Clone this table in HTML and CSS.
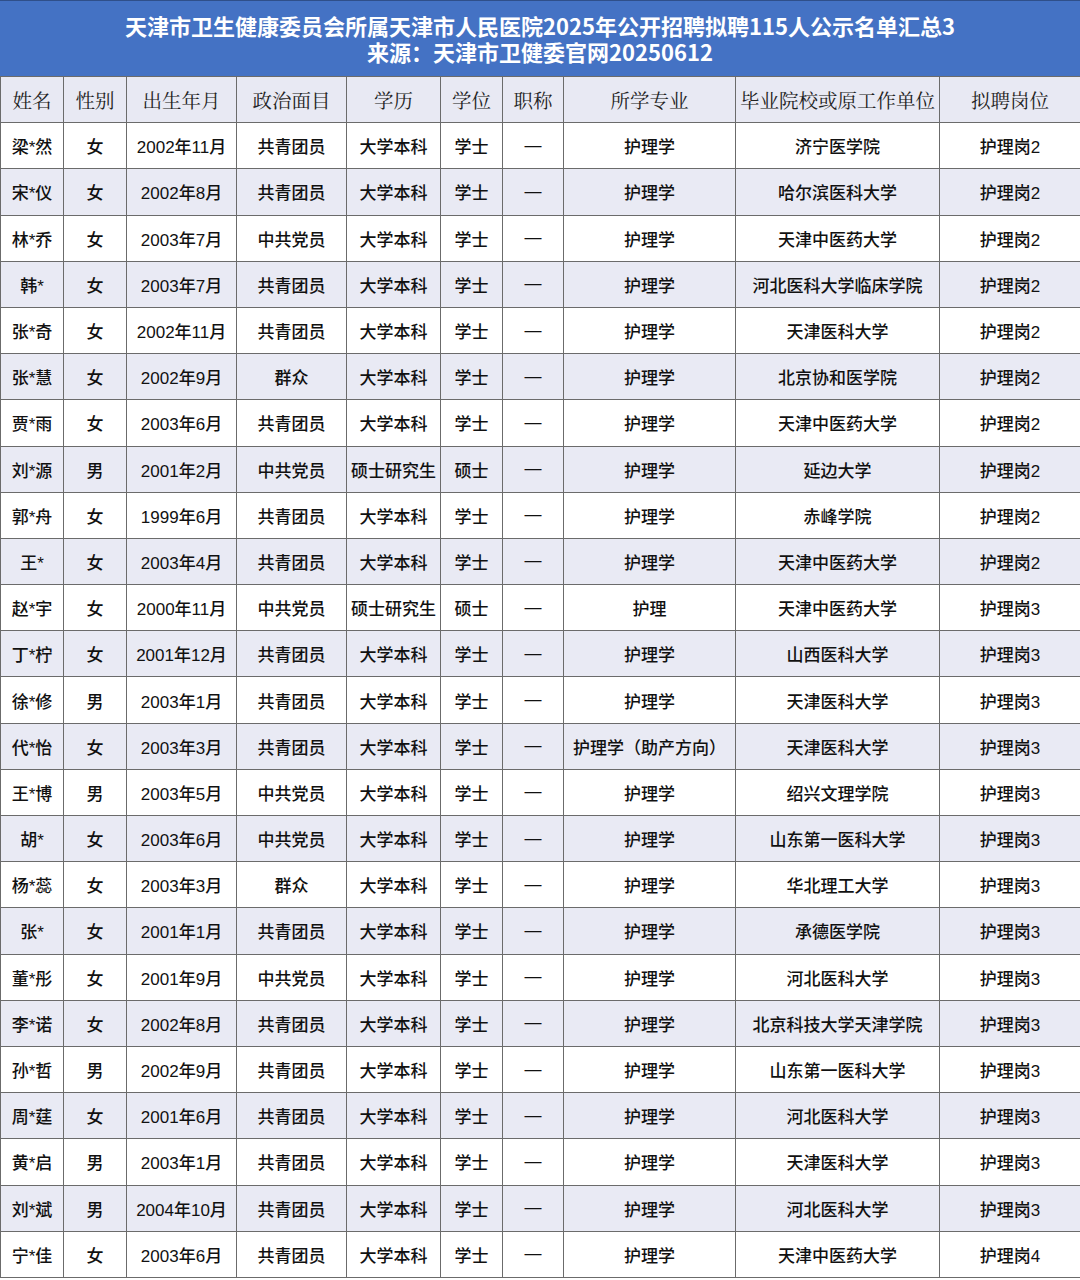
FILE: index.html
```html
<!DOCTYPE html>
<html lang="zh-CN">
<head>
<meta charset="utf-8">
<link rel="stylesheet" href="styles.css">
</head>
<body>
<div class="title">
  <div class="title-line">天津市卫生健康委员会所属天津市人民医院2025年公开招聘拟聘115人公示名单汇总3</div>
  <div class="title-line">来源：天津市卫健委官网20250612</div>
</div>
<table class="list">
  <colgroup>
    <col class="c1"><col class="c2"><col class="c3"><col class="c4"><col class="c5">
    <col class="c6"><col class="c7"><col class="c8"><col class="c9"><col class="c10">
  </colgroup>
  <thead>
    <tr><th>姓名</th><th>性别</th><th>出生年月</th><th>政治面目</th><th>学历</th><th>学位</th><th>职称</th><th>所学专业</th><th>毕业院校或原工作单位</th><th>拟聘岗位</th></tr>
  </thead>
  <tbody>
    <tr><td>梁*然</td><td>女</td><td>2002年11月</td><td>共青团员</td><td>大学本科</td><td>学士</td><td>—</td><td>护理学</td><td>济宁医学院</td><td>护理岗2</td></tr>
    <tr><td>宋*仪</td><td>女</td><td>2002年8月</td><td>共青团员</td><td>大学本科</td><td>学士</td><td>—</td><td>护理学</td><td>哈尔滨医科大学</td><td>护理岗2</td></tr>
    <tr><td>林*乔</td><td>女</td><td>2003年7月</td><td>中共党员</td><td>大学本科</td><td>学士</td><td>—</td><td>护理学</td><td>天津中医药大学</td><td>护理岗2</td></tr>
    <tr><td>韩*</td><td>女</td><td>2003年7月</td><td>共青团员</td><td>大学本科</td><td>学士</td><td>—</td><td>护理学</td><td>河北医科大学临床学院</td><td>护理岗2</td></tr>
    <tr><td>张*奇</td><td>女</td><td>2002年11月</td><td>共青团员</td><td>大学本科</td><td>学士</td><td>—</td><td>护理学</td><td>天津医科大学</td><td>护理岗2</td></tr>
    <tr><td>张*慧</td><td>女</td><td>2002年9月</td><td>群众</td><td>大学本科</td><td>学士</td><td>—</td><td>护理学</td><td>北京协和医学院</td><td>护理岗2</td></tr>
    <tr><td>贾*雨</td><td>女</td><td>2003年6月</td><td>共青团员</td><td>大学本科</td><td>学士</td><td>—</td><td>护理学</td><td>天津中医药大学</td><td>护理岗2</td></tr>
    <tr><td>刘*源</td><td>男</td><td>2001年2月</td><td>中共党员</td><td>硕士研究生</td><td>硕士</td><td>—</td><td>护理学</td><td>延边大学</td><td>护理岗2</td></tr>
    <tr><td>郭*舟</td><td>女</td><td>1999年6月</td><td>共青团员</td><td>大学本科</td><td>学士</td><td>—</td><td>护理学</td><td>赤峰学院</td><td>护理岗2</td></tr>
    <tr><td>王*</td><td>女</td><td>2003年4月</td><td>共青团员</td><td>大学本科</td><td>学士</td><td>—</td><td>护理学</td><td>天津中医药大学</td><td>护理岗2</td></tr>
    <tr><td>赵*宇</td><td>女</td><td>2000年11月</td><td>中共党员</td><td>硕士研究生</td><td>硕士</td><td>—</td><td>护理</td><td>天津中医药大学</td><td>护理岗3</td></tr>
    <tr><td>丁*柠</td><td>女</td><td>2001年12月</td><td>共青团员</td><td>大学本科</td><td>学士</td><td>—</td><td>护理学</td><td>山西医科大学</td><td>护理岗3</td></tr>
    <tr><td>徐*修</td><td>男</td><td>2003年1月</td><td>共青团员</td><td>大学本科</td><td>学士</td><td>—</td><td>护理学</td><td>天津医科大学</td><td>护理岗3</td></tr>
    <tr><td>代*怡</td><td>女</td><td>2003年3月</td><td>共青团员</td><td>大学本科</td><td>学士</td><td>—</td><td>护理学（助产方向）</td><td>天津医科大学</td><td>护理岗3</td></tr>
    <tr><td>王*博</td><td>男</td><td>2003年5月</td><td>中共党员</td><td>大学本科</td><td>学士</td><td>—</td><td>护理学</td><td>绍兴文理学院</td><td>护理岗3</td></tr>
    <tr><td>胡*</td><td>女</td><td>2003年6月</td><td>中共党员</td><td>大学本科</td><td>学士</td><td>—</td><td>护理学</td><td>山东第一医科大学</td><td>护理岗3</td></tr>
    <tr><td>杨*蕊</td><td>女</td><td>2003年3月</td><td>群众</td><td>大学本科</td><td>学士</td><td>—</td><td>护理学</td><td>华北理工大学</td><td>护理岗3</td></tr>
    <tr><td>张*</td><td>女</td><td>2001年1月</td><td>共青团员</td><td>大学本科</td><td>学士</td><td>—</td><td>护理学</td><td>承德医学院</td><td>护理岗3</td></tr>
    <tr><td>董*彤</td><td>女</td><td>2001年9月</td><td>中共党员</td><td>大学本科</td><td>学士</td><td>—</td><td>护理学</td><td>河北医科大学</td><td>护理岗3</td></tr>
    <tr><td>李*诺</td><td>女</td><td>2002年8月</td><td>共青团员</td><td>大学本科</td><td>学士</td><td>—</td><td>护理学</td><td>北京科技大学天津学院</td><td>护理岗3</td></tr>
    <tr><td>孙*哲</td><td>男</td><td>2002年9月</td><td>共青团员</td><td>大学本科</td><td>学士</td><td>—</td><td>护理学</td><td>山东第一医科大学</td><td>护理岗3</td></tr>
    <tr><td>周*莛</td><td>女</td><td>2001年6月</td><td>共青团员</td><td>大学本科</td><td>学士</td><td>—</td><td>护理学</td><td>河北医科大学</td><td>护理岗3</td></tr>
    <tr><td>黄*启</td><td>男</td><td>2003年1月</td><td>共青团员</td><td>大学本科</td><td>学士</td><td>—</td><td>护理学</td><td>天津医科大学</td><td>护理岗3</td></tr>
    <tr><td>刘*斌</td><td>男</td><td>2004年10月</td><td>共青团员</td><td>大学本科</td><td>学士</td><td>—</td><td>护理学</td><td>河北医科大学</td><td>护理岗3</td></tr>
    <tr><td>宁*佳</td><td>女</td><td>2003年6月</td><td>共青团员</td><td>大学本科</td><td>学士</td><td>—</td><td>护理学</td><td>天津中医药大学</td><td>护理岗4</td></tr>
  </tbody>
</table>
</body>
</html>
```
FILE: styles.css
```css
html, body {
  margin: 0;
  padding: 0;
  background: #ffffff;
}
body {
  width: 1080px;
  font-family: "Liberation Sans", "Noto Sans CJK SC", sans-serif;
  color: #111111;
}
.title {
  height: 76px;
  background: #4472c4;
  border-top: 1px solid #2f4f8a;
  display: flex;
  flex-direction: column;
  justify-content: center;
  align-items: center;
  color: #ffffff;
  font-family: "Noto Sans CJK SC", sans-serif;
  font-weight: 700;
  font-size: 22px;
  line-height: 26px;
  padding-bottom: 2px;
  box-sizing: border-box;
}
.list {
  width: 1080px;
  table-layout: fixed;
  border-collapse: collapse;
}
.c1 { width: 63px; }
.c2 { width: 63px; }
.c3 { width: 110px; }
.c4 { width: 110px; }
.c5 { width: 94px; }
.c6 { width: 62px; }
.c7 { width: 61px; }
.c8 { width: 172px; }
.c9 { width: 204px; }
.c10 { width: 141px; }
.list th, .list td {
  border: 1px solid #6b6b6b;
  text-align: center;
  vertical-align: middle;
  padding: 0;
  white-space: nowrap;
  overflow: hidden;
}
.list tr {
  height: 46.2px;
}
.list th {
  background: #e8e9f3;
  font-family: "Noto Serif CJK SC", "Noto Sans CJK SC", serif;
  font-weight: 400;
  font-size: 19.5px;
  color: #222222;
}
.list td {
  font-size: 17px;
  font-weight: 500;
}
.list tbody tr:nth-child(even) td {
  background: #e9eaf4;
}
.list tbody tr:nth-child(odd) td {
  background: #ffffff;
}
```
